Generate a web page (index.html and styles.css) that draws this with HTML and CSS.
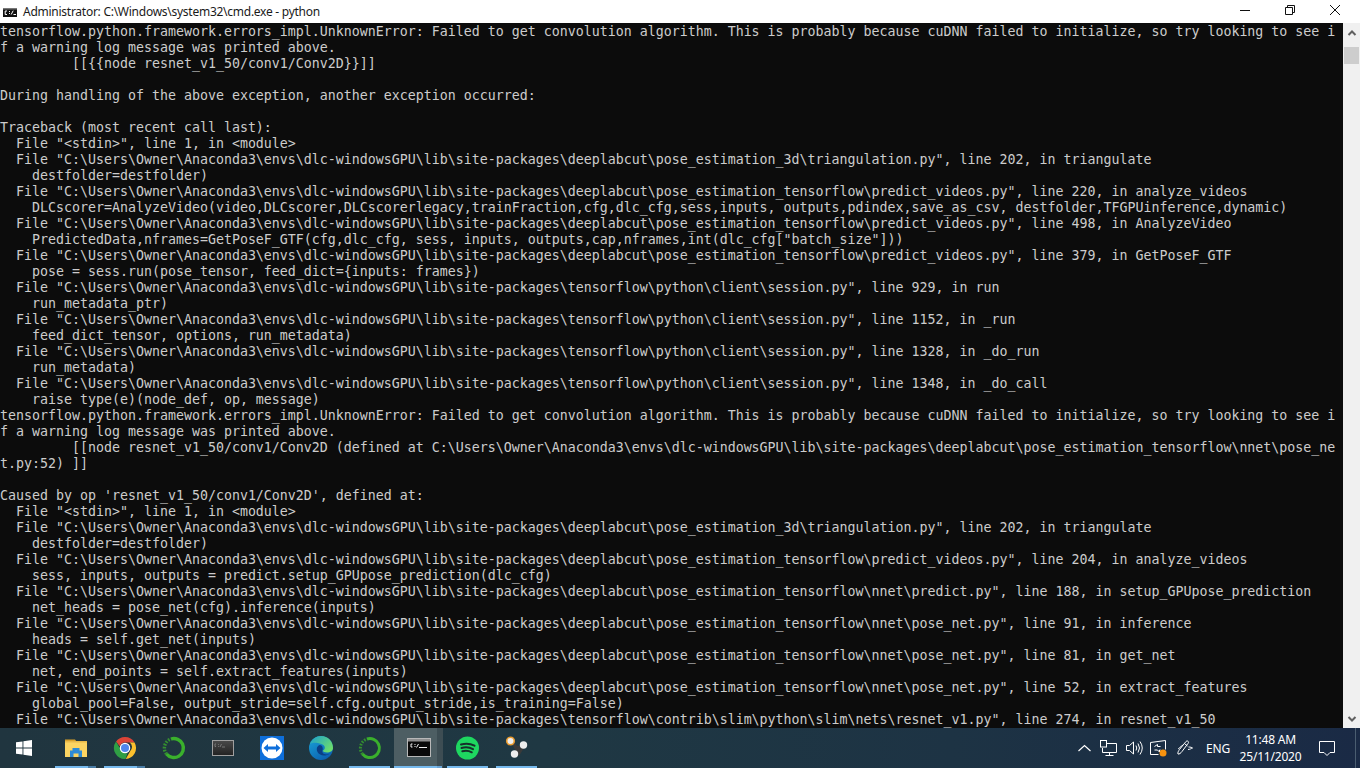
FILE: index.html
```html
<!DOCTYPE html>
<html lang="en">
<head>
<meta charset="utf-8">
<title>Administrator: C:\Windows\system32\cmd.exe - python</title>
<link rel="stylesheet" href="styles.css">
</head>
<body>
<div class="window">
  <header class="titlebar">
    <svg class="title-icon" width="16" height="16" viewBox="0 0 16 16"><rect x="1" y="4" width="14" height="9" fill="#111"/><rect x="1" y="4" width="14" height="1.5" fill="#777"/><path d="M5 7H3.200v3.500H5M7 7.500h1M7 9.500h1M9.200 10.500l2-3.800M11.500 10.500H14" stroke="#fff" fill="none"/></svg>
    <span class="title-text">Administrator: C:\Windows\system32\cmd.exe - python</span>
    <div class="caption">
      <span class="cap-btn"><svg width="12" height="12" viewBox="0 0 12 12"><path d="M1 6.500h10" stroke="#111"/></svg></span>
      <span class="cap-btn"><svg width="12" height="12" viewBox="0 0 12 12"><path d="M1.500 3.500h7v7h-7zM3.500 3.500v-2h7v7h-2" stroke="#111" fill="none"/></svg></span>
      <span class="cap-btn"><svg width="12" height="12" viewBox="0 0 12 12"><path d="M1 1l10 10M11 1L1 11" stroke="#111" fill="none"/></svg></span>
    </div>
  </header>
  <main class="client">
<pre class="console">tensorflow.python.framework.errors_impl.UnknownError: Failed to get convolution algorithm. This is probably because cuDNN failed to initialize, so try looking to see i
f a warning log message was printed above.
         [[{{node resnet_v1_50/conv1/Conv2D}}]]

During handling of the above exception, another exception occurred:

Traceback (most recent call last):
  File "&lt;stdin&gt;", line 1, in &lt;module&gt;
  File "C:\Users\Owner\Anaconda3\envs\dlc-windowsGPU\lib\site-packages\deeplabcut\pose_estimation_3d\triangulation.py", line 202, in triangulate
    destfolder=destfolder)
  File "C:\Users\Owner\Anaconda3\envs\dlc-windowsGPU\lib\site-packages\deeplabcut\pose_estimation_tensorflow\predict_videos.py", line 220, in analyze_videos
    DLCscorer=AnalyzeVideo(video,DLCscorer,DLCscorerlegacy,trainFraction,cfg,dlc_cfg,sess,inputs, outputs,pdindex,save_as_csv, destfolder,TFGPUinference,dynamic)
  File "C:\Users\Owner\Anaconda3\envs\dlc-windowsGPU\lib\site-packages\deeplabcut\pose_estimation_tensorflow\predict_videos.py", line 498, in AnalyzeVideo
    PredictedData,nframes=GetPoseF_GTF(cfg,dlc_cfg, sess, inputs, outputs,cap,nframes,int(dlc_cfg["batch_size"]))
  File "C:\Users\Owner\Anaconda3\envs\dlc-windowsGPU\lib\site-packages\deeplabcut\pose_estimation_tensorflow\predict_videos.py", line 379, in GetPoseF_GTF
    pose = sess.run(pose_tensor, feed_dict={inputs: frames})
  File "C:\Users\Owner\Anaconda3\envs\dlc-windowsGPU\lib\site-packages\tensorflow\python\client\session.py", line 929, in run
    run_metadata_ptr)
  File "C:\Users\Owner\Anaconda3\envs\dlc-windowsGPU\lib\site-packages\tensorflow\python\client\session.py", line 1152, in _run
    feed_dict_tensor, options, run_metadata)
  File "C:\Users\Owner\Anaconda3\envs\dlc-windowsGPU\lib\site-packages\tensorflow\python\client\session.py", line 1328, in _do_run
    run_metadata)
  File "C:\Users\Owner\Anaconda3\envs\dlc-windowsGPU\lib\site-packages\tensorflow\python\client\session.py", line 1348, in _do_call
    raise type(e)(node_def, op, message)
tensorflow.python.framework.errors_impl.UnknownError: Failed to get convolution algorithm. This is probably because cuDNN failed to initialize, so try looking to see i
f a warning log message was printed above.
         [[node resnet_v1_50/conv1/Conv2D (defined at C:\Users\Owner\Anaconda3\envs\dlc-windowsGPU\lib\site-packages\deeplabcut\pose_estimation_tensorflow\nnet\pose_ne
t.py:52) ]]

Caused by op 'resnet_v1_50/conv1/Conv2D', defined at:
  File "&lt;stdin&gt;", line 1, in &lt;module&gt;
  File "C:\Users\Owner\Anaconda3\envs\dlc-windowsGPU\lib\site-packages\deeplabcut\pose_estimation_3d\triangulation.py", line 202, in triangulate
    destfolder=destfolder)
  File "C:\Users\Owner\Anaconda3\envs\dlc-windowsGPU\lib\site-packages\deeplabcut\pose_estimation_tensorflow\predict_videos.py", line 204, in analyze_videos
    sess, inputs, outputs = predict.setup_GPUpose_prediction(dlc_cfg)
  File "C:\Users\Owner\Anaconda3\envs\dlc-windowsGPU\lib\site-packages\deeplabcut\pose_estimation_tensorflow\nnet\predict.py", line 188, in setup_GPUpose_prediction
    net_heads = pose_net(cfg).inference(inputs)
  File "C:\Users\Owner\Anaconda3\envs\dlc-windowsGPU\lib\site-packages\deeplabcut\pose_estimation_tensorflow\nnet\pose_net.py", line 91, in inference
    heads = self.get_net(inputs)
  File "C:\Users\Owner\Anaconda3\envs\dlc-windowsGPU\lib\site-packages\deeplabcut\pose_estimation_tensorflow\nnet\pose_net.py", line 81, in get_net
    net, end_points = self.extract_features(inputs)
  File "C:\Users\Owner\Anaconda3\envs\dlc-windowsGPU\lib\site-packages\deeplabcut\pose_estimation_tensorflow\nnet\pose_net.py", line 52, in extract_features
    global_pool=False, output_stride=self.cfg.output_stride,is_training=False)
  File "C:\Users\Owner\Anaconda3\envs\dlc-windowsGPU\lib\site-packages\tensorflow\contrib\slim\python\slim\nets\resnet_v1.py", line 274, in resnet_v1_50</pre>
    <div class="scrollbar">
      <span class="scroll-arrow"><svg width="10" height="8" viewBox="0 0 10 8"><path d="M1.500 6L5 2.500 8.500 6" stroke="#606060" stroke-width="2" fill="none"/></svg></span>
      <span class="scroll-thumb"></span>
      <span class="scroll-arrow scroll-end"><svg width="10" height="8" viewBox="0 0 10 8"><path d="M1.500 2L5 5.500 8.500 2" stroke="#606060" stroke-width="2" fill="none"/></svg></span>
    </div>
  </main>
  <footer class="taskbar">
    <div class="start">
      <svg width="16" height="16" viewBox="0 0 16 16"><path d="M0 2.300l6.500-.9v6.200H0zM7.400 1.300L16 0v7.600H7.400zM0 8.400h6.500v6.200L0 13.700zM7.400 8.400H16V16l-8.600-1.300z" fill="#fff"/></svg>
    </div>
    <div class="task multi">
      <svg width="24" height="24" viewBox="0 0 24 24"><path d="M1 3.500h10l2 2.500H1z" fill="#d9a12b"/><rect x="1" y="5" width="22" height="16" fill="#fcd462"/><rect x="1" y="5" width="22" height="1.500" fill="#e9b94a"/><path d="M6 21v-6.500h2.500V12h7v2.500H18V21h-3.500v-3.500h-5V21z" fill="#2d8ad6"/></svg>
    </div>
    <div class="task multi">
      <svg width="24" height="24" viewBox="0 0 48 48"><path d="M24 2a22 22 0 0 1 19.100 11H24a11 11 0 0 0-10.500 7.700L6.100 11.200A22 22 0 0 1 24 2z" fill="#db4437"/><path d="M43.100 13A22 22 0 0 1 25.500 46l9-16a11 11 0 0 0-1.200-17z" fill="#fbc02d"/><path d="M6.100 11.200l9.400 16.300A11 11 0 0 0 29 34l-4 12A22 22 0 0 1 6.100 11.200z" fill="#2f9e44"/><circle cx="24" cy="24" r="10.500" fill="#fff"/><circle cx="24" cy="24" r="8" fill="#4f86ec"/></svg>
    </div>
    <div class="task">
      <svg width="24" height="24" viewBox="0 0 24 24"><path d="M9 3A9.500 9.500 0 1 1 4.500 18" stroke="#3ab02c" stroke-width="3.400" fill="none"/><path d="M4.500 18A9.500 9.500 0 0 1 9 3" stroke="#35902f" stroke-width="3.400" stroke-dasharray="1.700 1.300" fill="none"/></svg>
    </div>
    <div class="task">
      <svg width="24" height="24" viewBox="0 0 24 24"><defs><linearGradient id="darkApp" x1="0" y1="0" x2="0" y2="1"><stop offset="0" stop-color="#4a4a4a"/><stop offset="1" stop-color="#222"/></linearGradient></defs><rect x="1.500" y="4.500" width="21" height="15" fill="url(#darkApp)" stroke="#a0a0a0"/><path d="M5 8H4v2.500h1M7 8.500h.8M7 10.500h.8M9 11l1.500-3M11 11h3" stroke="#777" fill="none"/></svg>
    </div>
    <div class="task">
      <svg width="24" height="24" viewBox="0 0 24 24"><rect width="24" height="24" fill="#0e6fdb"/><circle cx="12" cy="12" r="10.500" fill="#fff"/><path d="M3.500 12l4.500-4v2.500h8V8l4.500 4-4.500 4v-2.500H8V16z" fill="#0e6fdb"/></svg>
    </div>
    <div class="task">
      <svg width="24" height="24" viewBox="0 0 24 24"><defs><linearGradient id="edgeBlue" x1="0" y1="0" x2="0.700" y2="1"><stop offset="0" stop-color="#1aa5d8"/><stop offset="1" stop-color="#0b5fb0"/></linearGradient><linearGradient id="edgeGreen" x1="0" y1="0" x2="1" y2="0.700"><stop offset="0" stop-color="#1b9fd0"/><stop offset="1" stop-color="#6ede6a"/></linearGradient></defs><circle cx="12" cy="12" r="12" fill="url(#edgeBlue)"/><path d="M1 8C3 3 7 0 12 0c7 0 12 5 12 12 0 3-3 4.500-6 4.500-2.500 0-4-1-4.500-2 3-.5 3.500-5-1-6.500C8 6.500 3.500 6 1 8z" fill="url(#edgeGreen)"/><path d="M11 9c-3 .5-4 4-2.500 7 1.500 3 6 4.500 9.500 3 1.500-.5 1.500-.5 2.500-1.500C16 20 12.500 17 13.500 14.500 14.500 12 13 9 11 9z" fill="#0a3f86"/></svg>
    </div>
    <div class="task">
      <svg width="24" height="24" viewBox="0 0 24 24"><path d="M9 3A9.500 9.500 0 1 1 4.500 18" stroke="#3ab02c" stroke-width="3" fill="none"/><path d="M4.500 18A9.500 9.500 0 0 1 9 3" stroke="#35902f" stroke-width="3" stroke-dasharray="1.700 1.300" fill="none"/></svg>
    </div>
    <div class="task active">
      <svg width="24" height="20" viewBox="0 0 24 20"><rect x=".5" y=".5" width="23" height="18" fill="#0a0a0a" stroke="#b8b8b8"/><rect x="1" y="1" width="22" height="2.500" fill="#8f8f8f"/><path d="M5.500 6H4v3h1.500M7.500 6.500h1M7.500 8.500h1M9.500 9.500l2-3.500M12 9.500h8" stroke="#eee" fill="none"/></svg>
    </div>
    <div class="task">
      <svg width="24" height="24" viewBox="0 0 24 24"><circle cx="11.500" cy="12" r="11.500" fill="#1ed760"/><path d="M5 8.500c4-1.200 9.500-1 13.500 1.200M5.500 12c3.500-1 8-.8 11.500 1.200M6.300 15.300c3-.8 6.500-.6 9.500 1" stroke="#16302a" stroke-width="2" stroke-linecap="round" fill="none"/></svg>
    </div>
    <div class="task">
      <svg width="24" height="24" viewBox="0 0 24 24"><path d="M6 5l6 6 7-1-5 8z" stroke="#3a3a3a" stroke-width="2" fill="#3a3a3a"/><circle cx="5.500" cy="5" r="3.800" fill="#eee" stroke="#e89a2c" stroke-width="1.600"/><circle cx="18.500" cy="9" r="3.700" fill="#eee"/><circle cx="9.500" cy="18" r="3.700" fill="#eee"/></svg>
    </div>
    <div class="tray">
      <span class="tray-item"><svg width="16" height="16" viewBox="0 0 16 16"><path d="M1.500 11l6-5.500 6 5.500" stroke="#fff" stroke-width="1.200" fill="none"/></svg></span>
      <span class="tray-item"><svg width="18" height="18" viewBox="0 0 18 18"><path d="M6.500 4.500h10v9h-14V9M9.500 13.500v2.500M5.500 16.500h8" stroke="#fff" fill="none"/><rect x=".5" y="1.500" width="6" height="6.500" fill="#1c2f42" stroke="#fff"/></svg></span>
      <span class="tray-item"><svg width="18" height="18" viewBox="0 0 18 18"><path d="M1.500 6.500h3l4-3.500v12l-4-3.500h-3zM11 6.500q1.500 2.500 0 5M13 4.500q3 4.500 0 9M15 2.500q4.500 6.500 0 13" stroke="#fff" fill="none"/></svg></span>
      <span class="tray-item"><svg width="18" height="18" viewBox="0 0 18 18"><path d="M1.500 3.500l15-2v9M1.500 3.500v12h8" stroke="#fff" fill="none"/><path d="M5.500 7.500l3-2v2h3M5.500 11h3M8.500 11l2 2v-2h1" stroke="#fff" fill="none"/><circle cx="14" cy="14" r="3.500" fill="#f7920f"/></svg></span>
      <span class="tray-item tray-pen"><svg width="18" height="18" viewBox="0 0 18 18"><path d="M10 2.500c1.500-1.500 3.500.5 2 2L6 12.500c-1 1.500-3 3-4 2.500-.5-1.500.5-3 1.500-4.500zM9 5l2.500 2M7 6c-3 2-4 3.500-5 4M12.500 8c2 0 3.500.5 4 1-1 .5-3 1.500-4.500 1.500" stroke="#fff" fill="none"/></svg></span>
      <span class="lang">ENG</span>
      <div class="clock"><span>11:48 AM</span><span>25/11/2020</span></div>
      <span class="notify"><svg width="18" height="18" viewBox="0 0 18 18"><path d="M1.500 2.500h15v11H12l-3 3-3-3H1.500z" stroke="#fff" fill="none"/></svg></span>
      <span class="show-desktop"></span>
    </div>
  </footer>
</div>
</body>
</html>
```
FILE: styles.css
```css
* { box-sizing: border-box; }
html, body { margin: 0; padding: 0; }
body { width: 1360px; height: 768px; overflow: hidden; background: #0c0c0c; }
.window { display: flex; flex-direction: column; height: 768px; }

.titlebar { display: flex; align-items: center; height: 23px; background: #fff; flex: none; }
.title-icon { margin: 0 5px 0 2px; flex: none; }
.title-text { font: 12px/23px "Noto Sans", sans-serif; color: #1a1a1a; white-space: nowrap; letter-spacing: -0.26px; }
.caption { display: flex; margin-left: auto; margin-right: 3px; align-self: flex-start; }
.cap-btn { display: flex; align-items: center; justify-content: center; width: 45px; height: 20px; }

.client { display: flex; height: 705px; flex: none; }
.console { flex: 1; margin: 0; padding-top: 1px; height: 705px; overflow: hidden; background: #0c0c0c; color: #cccccc; font: 13.29px/16px "DejaVu Sans Mono", monospace; white-space: pre; }
.scrollbar { display: flex; flex-direction: column; align-items: center; width: 17px; flex: none; background: #f0f0f0; }
.scroll-arrow { display: flex; align-items: center; justify-content: center; width: 17px; height: 17px; margin-top: 1px; }
.scroll-thumb { display: block; width: 15px; height: 17px; margin-top: 6px; background: #cdcdcd; }
.scroll-end { margin-top: auto; margin-bottom: 1px; }

.taskbar { display: flex; align-items: stretch; height: 40px; flex: none; background: linear-gradient(90deg, #20353f 0%, #1f3843 40%, #1d3344 70%, #1a2a45 100%); color: #fff; }
.start { display: flex; align-items: center; justify-content: center; width: 48px; margin-right: 3px; }
.task { position: relative; display: flex; align-items: center; justify-content: center; width: 49px; }
.task::after { content: ""; position: absolute; left: 4px; right: 4px; bottom: 0; height: 2px; background: #76b9ed; display: none; }
.task:nth-child(2)::after, .task:nth-child(3)::after, .task:nth-child(8)::after, .task:nth-child(9)::after, .task:nth-child(10)::after, .task:nth-child(11)::after { display: block; }
.task.multi::after { background: linear-gradient(90deg, #76b9ed 0, #76b9ed 80%, #4a7da6 80%); }
.task.active { background: linear-gradient(90deg, #4d5e63 0, #4d5e63 88%, #3d4d53 88%, #3d4d53 100%); }
.task.active::after { left: 0; right: 1px; background: linear-gradient(90deg, #76b9ed 0, #76b9ed 90%, #6aa5d6 90%); }

.tray { display: flex; align-items: center; margin-left: auto; height: 40px; }
.tray-item { display: flex; align-items: center; justify-content: center; width: 24.5px; height: 40px; }
.tray-pen { margin-left: 2px; margin-right: 4px; }
.lang { width: 34px; text-align: center; font: 12px "Noto Sans", sans-serif; letter-spacing: -0.2px; }
.clock { display: flex; flex-direction: column; align-items: center; width: 71px; margin-right: 1px; font: 12px/17px "Noto Sans", sans-serif; letter-spacing: -0.2px; }
.notify { display: flex; align-items: center; justify-content: center; width: 40px; height: 40px; margin-right: 8px; }
.show-desktop { display: block; width: 5px; height: 40px; border-left: 1px solid #4a5d70; }
```
